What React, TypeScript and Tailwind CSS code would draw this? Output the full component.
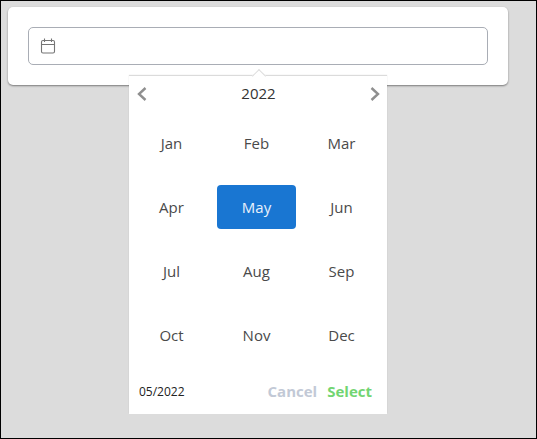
const MONTHS = ['Jan', 'Feb', 'Mar', 'Apr', 'May', 'Jun', 'Jul', 'Aug', 'Sep', 'Oct', 'Nov', 'Dec'];

function Chevron({ flip = false }: { flip?: boolean }) {
  return (
    <svg width="12" height="16" viewBox="0 0 12 16" fill="none" className={flip ? 'rotate-180' : ''}>
      <path d="M9.5 2 L3 8 L9.5 14" stroke="#8f8f8f" strokeWidth="2.4" />
    </svg>
  );
}

function CalendarIcon() {
  return (
    <svg width="16" height="16" viewBox="0 0 16 16" fill="none" stroke="#757575" strokeWidth="1.1">
      <rect x="1.5" y="2.5" width="13" height="12.5" rx="1.5" />
      <path d="M1.5 6.5 H14.5 M4.5 0.5 V4 M11.5 0.5 V4" />
    </svg>
  );
}

export default function App() {
  return (
    <div className="relative h-[439px] w-[537px] border border-black bg-[#dcdcdc] pt-[6px] pl-[7px] font-['Open_Sans','Noto_Sans',sans-serif]">
      <div className="w-[500px] rounded-[5px] bg-white px-5 py-5 shadow-[0_1px_2px_rgba(0,0,0,0.45)]">
        <div className="flex h-[38px] items-center rounded-[5px] border border-[#a9adb5] bg-white pl-[11px]">
          <CalendarIcon />
        </div>
      </div>

      <div className="absolute top-[75px] left-[128px] w-[258px] bg-white shadow-[0_-1px_1px_rgba(0,0,0,0.14)]">
        <div className="absolute -top-[5px] left-[125px] h-[10px] w-[10px] rotate-45 border-t border-l border-[#dddddd] bg-white" />
        <div className="relative flex h-[35px] items-center justify-between pr-[6px] pl-[7px]">
          <Chevron />
          <span className="text-[15px] text-[#333333]">2022</span>
          <Chevron flip />
        </div>
        <div className="grid w-[255px] grid-cols-3 gap-y-5 pt-[10px]">
          {MONTHS.map((m) => (
            <div
              key={m}
              className={`mx-[3px] flex h-[44px] items-center justify-center rounded-[4px] text-[15px] ${
                m === 'May' ? 'bg-[#1976d2] font-medium text-[#e8f1fb]' : 'text-[#4a4a4a]'
              }`}
            >
              {m}
            </div>
          ))}
        </div>
        <div className="flex h-[57px] items-center justify-between pt-[11px] pr-[15px] pl-[10px]">
          <span className="mt-[1px] text-[12px] text-[#222222]">05/2022</span>
          <div className="flex gap-[10px] text-[15px] font-bold">
            <span className="text-[#c2c9d6]">Cancel</span>
            <span className="text-[#72d572]">Select</span>
          </div>
        </div>
      </div>
    </div>
  );
}
